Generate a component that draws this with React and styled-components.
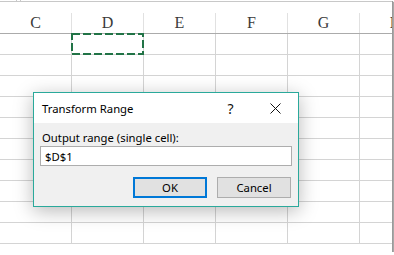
import React from "react";
import styled, { createGlobalStyle } from "styled-components";

const GlobalStyle = createGlobalStyle`
  html, body { margin: 0; padding: 0; background: #ffffff; }
  * { box-sizing: border-box; }
`;

const Frame = styled.div`
  position: relative;
  width: 392px;
  height: 252px;
  overflow: hidden;
  background: #ffffff;
  box-shadow: 1px 1px 0 #9a9a9a, 2px 2px 1px #a8a8a8, 3px 3px 1px #c4c4c4;
`;

const TopStrip = styled.div`
  display: flex;
  height: 2px;
  border-bottom: 1px solid #c8c8c8;
`;

const NameBox = styled.div`
  width: 17px;
  border-right: 1px solid #c8c8c8;
`;

const FormulaBox = styled.div`
  flex: 1;
  margin-left: 3px;
  border-left: 1px solid #c8c8c8;
`;

const HeaderRow = styled.div`
  display: grid;
  grid-template-columns: repeat(6, 72px);
  padding-top: 11px;
  border-bottom: 1px solid #ababab;
`;

const ColHeader = styled.div`
  height: 20px;
  border-right: 1px solid #e1e1e1;
  display: flex;
  align-items: center;
  justify-content: center;
  font-family: "Liberation Serif", "DejaVu Serif", serif;
  font-size: 16px;
  color: #3a3a3a;
  white-space: nowrap;
`;

const Row = styled.div`
  display: grid;
  grid-template-columns: repeat(6, 72px);
  height: 21px;
  border-bottom: 1px solid #d4d4d4;
`;

const Cell = styled.div`
  position: relative;
  border-right: 1px solid #d4d4d4;
`;

const Marquee = styled.svg`
  position: absolute;
  left: -1px;
  top: -1px;
  overflow: visible;
`;

const Dialog = styled.div`
  position: absolute;
  left: 33px;
  top: 92px;
  width: 266px;
  height: 115px;
  border: 1px solid #2aa99b;
  background: #f0f0f0;
  display: flex;
  flex-direction: column;
  box-shadow: 0 4px 18px rgba(0, 0, 0, 0.28);
  font-family: "Noto Sans", "Open Sans", sans-serif;
  font-size: 11.3px;
  color: #000;
`;

const TitleBar = styled.div`
  display: flex;
  align-items: center;
  height: 30px;
  background: #ffffff;
`;

const Title = styled.div`
  flex: 1;
  padding-left: 8px;
  padding-top: 1px;
  white-space: nowrap;
`;

const TitleButton = styled.div`
  width: 45px;
  height: 30px;
  display: flex;
  align-items: center;
  justify-content: center;
  font-size: 14px;
  color: #111;
`;

const Body = styled.div`
  flex: 1;
  padding: 7px 6px 0 6px;
  display: flex;
  flex-direction: column;
`;

const Label = styled.div`
  padding-left: 2px;
  line-height: 16px;
  white-space: nowrap;
`;

const Input = styled.div`
  height: 20px;
  border: 1px solid #adadad;
  background: #ffffff;
  padding-left: 4px;
  display: flex;
  align-items: center;
`;

const ButtonRow = styled.div`
  display: flex;
  justify-content: flex-end;
  gap: 10px;
  margin-top: 11px;
  padding-right: 1px;
`;

const Button = styled.div`
  width: 74px;
  height: 21px;
  display: flex;
  align-items: center;
  justify-content: center;
  background: #e1e1e1;
  border: ${(p) => (p.$primary ? "2px solid #0078d7" : "1px solid #adadad")};
`;

const columns = ["C", "D", "E", "F", "G", "H"];
const rowCount = 10;

export default function App() {
  return (
    <>
      <GlobalStyle />
      <Frame>
        <TopStrip>
          <NameBox />
          <FormulaBox />
        </TopStrip>
        <HeaderRow>
          {columns.map((c) => (
            <ColHeader key={c}>{c}</ColHeader>
          ))}
        </HeaderRow>
        {Array.from({ length: rowCount }).map((_, r) => (
          <Row key={r}>
            {columns.map((c, i) => (
              <Cell key={c}>
                {r === 0 && i === 1 && (
                  <Marquee width="73" height="22" viewBox="0 0 73 22">
                    <rect
                      x="1"
                      y="1"
                      width="71"
                      height="20"
                      fill="none"
                      stroke="#217346"
                      strokeWidth="2"
                      strokeDasharray="8 3"
                    />
                  </Marquee>
                )}
              </Cell>
            ))}
          </Row>
        ))}
        <Dialog>
          <TitleBar>
            <Title>Transform Range</Title>
            <TitleButton>?</TitleButton>
            <TitleButton>
              <svg width="11" height="11" viewBox="0 0 11 11">
                <path d="M0.5 0.5 L10.5 10.5 M10.5 0.5 L0.5 10.5" stroke="#111" strokeWidth="1" fill="none" />
              </svg>
            </TitleButton>
          </TitleBar>
          <Body>
            <Label>Output range (single cell):</Label>
            <Input>$D$1</Input>
            <ButtonRow>
              <Button $primary>OK</Button>
              <Button>Cancel</Button>
            </ButtonRow>
          </Body>
        </Dialog>
      </Frame>
    </>
  );
}
